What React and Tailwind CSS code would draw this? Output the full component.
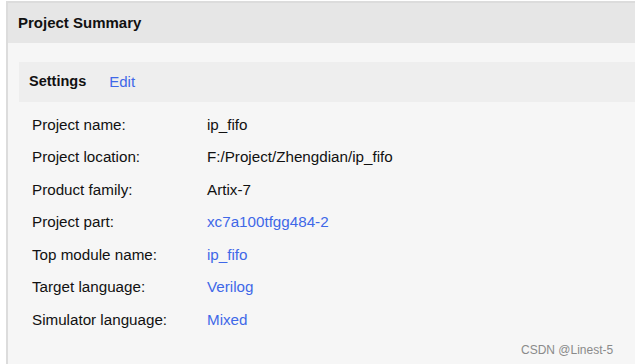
import React from 'react';

const rows = [
  { label: 'Project name:', value: 'ip_fifo' },
  { label: 'Project location:', value: 'F:/Project/Zhengdian/ip_fifo' },
  { label: 'Product family:', value: 'Artix-7' },
  { label: 'Project part:', value: 'xc7a100tfgg484-2', link: true },
  { label: 'Top module name:', value: 'ip_fifo', link: true },
  { label: 'Target language:', value: 'Verilog', link: true },
  { label: 'Simulator language:', value: 'Mixed', link: true },
];

export default function App() {
  return (
    <div className="w-[635px] h-[364px] bg-white pl-[6px] pt-[1px] overflow-hidden font-['Liberation_Sans',Arial,sans-serif]">
      <div className="relative h-[363px] border-l-2 border-t-2 border-[#dcdcdc] bg-[#f6f6f6]">
        <div className="h-[40px] bg-[#e6e6e6] flex items-center pl-[10px]">
          <span className="text-[15px] font-bold text-[#111]">Project Summary</span>
        </div>
        <div className="pl-[11px] pt-[19px]">
          <div className="h-[40px] bg-[#eeeeee] flex items-center pl-[10px]">
            <span className="text-[14.5px] font-bold text-[#111]">Settings</span>
            <span className="text-[15px] text-[#3f68e8] ml-[23px]">Edit</span>
          </div>
          <div className="pt-[7px] pl-[13px]">
            {rows.map((r) => (
              <div key={r.label} className="h-[32.5px] flex items-center text-[15.2px]">
                <span className="w-[175px] text-[#111]">{r.label}</span>
                <span className={r.link ? 'text-[#3f68e8]' : 'text-[#111]'}>{r.value}</span>
              </div>
            ))}
          </div>
        </div>
        <span className="absolute left-[513px] top-[338px] text-[12px] text-[#8a8a8a]">CSDN @Linest-5</span>
      </div>
    </div>
  );
}
